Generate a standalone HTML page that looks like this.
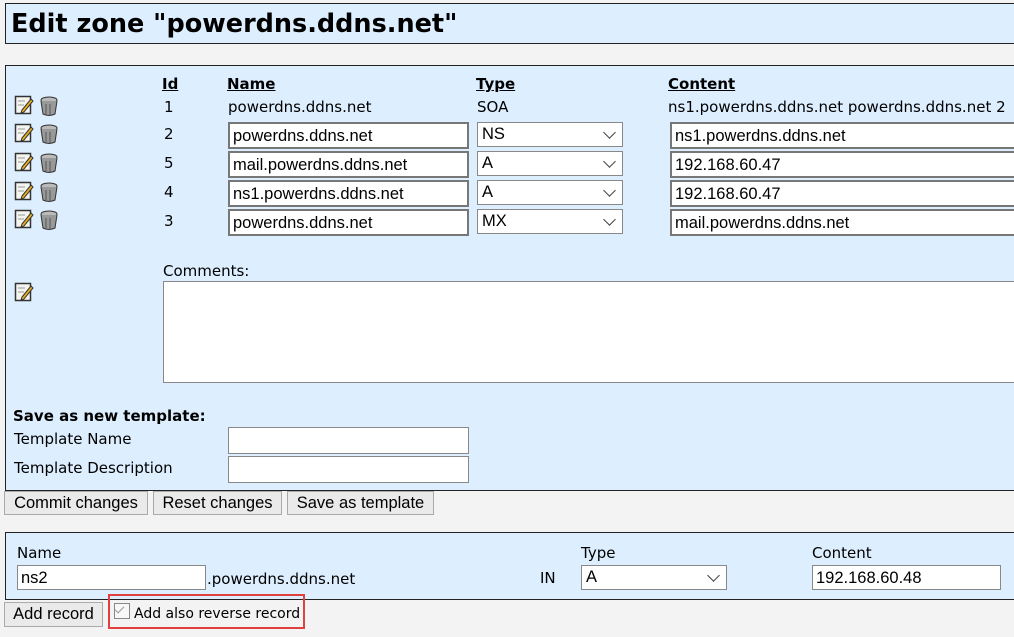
<!DOCTYPE html>
<html><head><style>
body{margin:0;width:1014px;height:637px;background:#f3f3f3;position:relative;overflow:hidden;font-family:"DejaVu Sans",Verdana,sans-serif;font-size:15px;color:#000}
.a{position:absolute}
.panel{position:absolute;background:#ddeeff;border:1px solid #222;border-right:none}
.inp{position:absolute;background:#fff;border:2px solid #777;box-sizing:border-box;font-family:"Liberation Sans",Arial,sans-serif;font-size:16.5px;padding-left:3px;line-height:24px}
.inp1{position:absolute;background:#fff;border:1px solid #888;box-sizing:border-box;font-family:"Liberation Sans",Arial,sans-serif;font-size:16.5px;padding-left:3px;line-height:24px}
.sel{position:absolute;background:#fff;border:1px solid #888;box-sizing:border-box;font-family:"Liberation Sans",Arial,sans-serif;font-size:16.5px;padding-left:4px;line-height:22px}
.sel:after{content:"";position:absolute;right:8px;top:5px;width:8px;height:8px;border-right:1.5px solid #444;border-bottom:1.5px solid #444;transform:rotate(45deg)}
.btn{position:absolute;background:#eaeaea;border:1px solid #aaa;box-sizing:border-box;font-family:"Liberation Sans",Arial,sans-serif;font-size:16.5px;text-align:center;line-height:23px}
.h{position:absolute;font-weight:bold;text-decoration:underline;font-size:15px}
</style></head><body>
<div class="a" style="left:5px;top:3px;width:1009px;height:39px;background:#ddeeff;border:1px solid #222;border-right:none"></div>
<div class="a" style="left:11px;top:7px;font-size:25.5px;font-weight:bold;line-height:34px">Edit zone "powerdns.ddns.net"</div>

<div class="panel" style="left:5px;top:65px;width:1009px;height:424px"></div>
<div class="h" style="left:162px;top:75px">Id</div>
<div class="h" style="left:227px;top:75px">Name</div>
<div class="h" style="left:476px;top:75px">Type</div>
<div class="h" style="left:668px;top:75px">Content</div>

<svg class="a" style="left:14px;top:94px" width="48" height="210">
<defs>
<g id="ed"><rect x="1.5" y="2.5" width="15" height="17" fill="#f4f4f0" stroke="#333" stroke-width="1.5"/><line x1="4" y1="7" x2="11" y2="7" stroke="#999"/><line x1="4" y1="11" x2="10" y2="11" stroke="#999"/><path d="M8 16 L17 5 L19 7 L10 18 L7 19Z" fill="#e8b020" stroke="#333"/></g>
<g id="tr"><ellipse cx="35" cy="5" rx="8" ry="3" fill="#bbb" stroke="#333"/><path d="M27 6 L29 19 Q35 22 41 19 L43 6" fill="#999" stroke="#333"/><line x1="32" y1="9" x2="32" y2="19" stroke="#555"/><line x1="36" y1="9" x2="36" y2="20" stroke="#555"/></g>
</defs>
<use href="#ed" y="0"/><use href="#tr" y="1"/>
<use href="#ed" y="28"/><use href="#tr" y="29"/>
<use href="#ed" y="57"/><use href="#tr" y="58"/>
<use href="#ed" y="86"/><use href="#tr" y="87"/>
<use href="#ed" y="114"/><use href="#tr" y="115"/>
<use href="#ed" y="187"/>
</svg>

<div class="a" style="left:164px;top:98px">1</div>
<div class="a" style="left:228px;top:98px">powerdns.ddns.net</div>
<div class="a" style="left:477px;top:98px">SOA</div>
<div class="a" style="left:668px;top:98px;white-space:nowrap">ns1.powerdns.ddns.net powerdns.ddns.net 2</div>

<div class="a" style="left:164px;top:125px">2</div>
<div class="inp" style="left:228px;top:122px;width:241px;height:27px">powerdns.ddns.net</div>
<div class="sel" style="left:477px;top:122px;width:146px;height:25px">NS</div>
<div class="inp" style="left:670px;top:122px;width:350px;height:27px">ns1.powerdns.ddns.net</div>

<div class="a" style="left:164px;top:154px">5</div>
<div class="inp" style="left:228px;top:151px;width:241px;height:27px">mail.powerdns.ddns.net</div>
<div class="sel" style="left:477px;top:151px;width:146px;height:25px">A</div>
<div class="inp" style="left:670px;top:151px;width:350px;height:27px">192.168.60.47</div>

<div class="a" style="left:164px;top:183px">4</div>
<div class="inp" style="left:228px;top:180px;width:241px;height:27px">ns1.powerdns.ddns.net</div>
<div class="sel" style="left:477px;top:180px;width:146px;height:25px">A</div>
<div class="inp" style="left:670px;top:180px;width:350px;height:27px">192.168.60.47</div>

<div class="a" style="left:164px;top:212px">3</div>
<div class="inp" style="left:228px;top:209px;width:241px;height:27px">powerdns.ddns.net</div>
<div class="sel" style="left:477px;top:209px;width:146px;height:25px">MX</div>
<div class="inp" style="left:670px;top:209px;width:350px;height:27px">mail.powerdns.ddns.net</div>

<div class="a" style="left:163px;top:262px">Comments:</div>
<div class="a" style="left:163px;top:281px;width:860px;height:100px;background:#fff;border:1px solid #888"></div>

<div class="a" style="left:13px;top:407px;font-weight:bold">Save as new template:</div>
<div class="a" style="left:14px;top:430px">Template Name</div>
<div class="a" style="left:14px;top:459px">Template Description</div>
<div class="inp1" style="left:228px;top:427px;width:241px;height:27px"></div>
<div class="inp1" style="left:228px;top:456px;width:241px;height:27px"></div>

<div class="btn" style="left:4px;top:491px;width:144px;height:24px">Commit changes</div>
<div class="btn" style="left:153px;top:491px;width:129px;height:24px">Reset changes</div>
<div class="btn" style="left:287px;top:491px;width:147px;height:24px">Save as template</div>

<div class="panel" style="left:5px;top:532px;width:1009px;height:66px"></div>
<div class="a" style="left:17px;top:544px">Name</div>
<div class="a" style="left:581px;top:544px">Type</div>
<div class="a" style="left:812px;top:544px">Content</div>
<div class="inp1" style="left:17px;top:565px;width:189px;height:25px">ns2</div>
<div class="a" style="left:207px;top:570px">.powerdns.ddns.net</div>
<div class="a" style="left:540px;top:569px">IN</div>
<div class="sel" style="left:581px;top:565px;width:146px;height:25px">A</div>
<div class="inp1" style="left:812px;top:565px;width:189px;height:25px">192.168.60.48</div>

<div class="btn" style="left:4px;top:602px;width:99px;height:25px">Add record</div>
<div class="a" style="left:108px;top:594px;width:193px;height:31px;border:2px solid #e04040"></div>
<div class="a" style="left:114px;top:603px;width:14px;height:14px;border:1px solid #888;background:#f8f8f8"></div>
<div class="a" style="left:117px;top:604px;width:4px;height:8px;border-right:1.5px solid #999;border-bottom:1.5px solid #999;transform:rotate(45deg)"></div>
<div class="a" style="left:134px;top:606px;font-size:14px">Add also reverse record</div>
</body></html>
